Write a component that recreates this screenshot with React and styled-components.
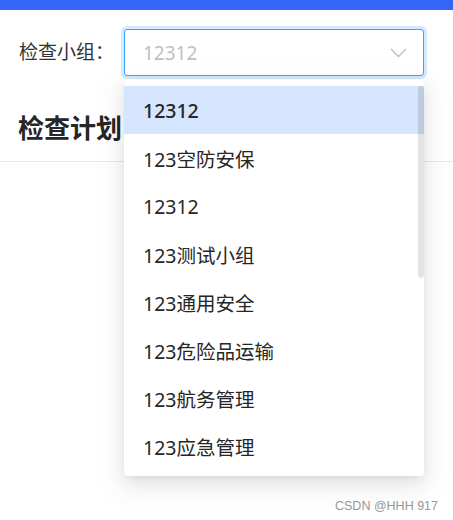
import React from "react";
import styled, { createGlobalStyle } from "styled-components";

const GlobalStyle = createGlobalStyle`
  body {
    margin: 0;
    background: #fff;
    font-family: "Noto Sans", "Noto Sans CJK SC", sans-serif;
    color: #262626;
  }
`;

const Page = styled.div`
  position: relative;
  height: 520px;
  overflow: hidden;
`;

const TopBar = styled.div`
  height: 10px;
  background: #3366f6;
`;

const FormRow = styled.div`
  display: flex;
  align-items: center;
  padding: 19px 0 0 19px;
`;

const Label = styled.label`
  font-size: 19px;
  color: #333;
  width: 105px;
  line-height: 47px;
`;

const SelectWrap = styled.div`
  position: relative;
  width: 300px;
  z-index: 2;
`;

const SelectBox = styled.div`
  box-sizing: border-box;
  height: 47px;
  display: flex;
  align-items: center;
  justify-content: space-between;
  padding: 0 16px 0 18px;
  border: 1px solid #40a0ff;
  border-radius: 3px;
  box-shadow: 0 0 0 3px rgba(64, 160, 255, 0.22);
  background: #fff;
`;

const Placeholder = styled.span`
  font-size: 19px;
  color: #bfbfbf;
`;

const Dropdown = styled.ul`
  position: absolute;
  top: calc(100% + 4px);
  left: 0;
  width: 300px;
  margin: 0;
  padding: 6px 0;
  list-style: none;
  background: #fff;
  border-radius: 4px;
  box-sizing: border-box;
  overflow: hidden;
  box-shadow: 0 6px 16px 0 rgba(0, 0, 0, 0.08),
    0 3px 6px -4px rgba(0, 0, 0, 0.12), 0 9px 28px 8px rgba(0, 0, 0, 0.05);
`;

const Option = styled.li`
  height: 48px;
  display: flex;
  align-items: center;
  padding-left: 19px;
  font-size: 19.5px;
  color: #262626;
  font-weight: ${({ active }) => (active ? 500 : 400)};
  background: ${({ active }) => (active ? "#d5e5fd" : "transparent")};
`;

const ScrollThumb = styled.div`
  position: absolute;
  top: 6px;
  right: 0;
  width: 6px;
  height: 192px;
  border-radius: 3px;
  background: rgba(0, 0, 0, 0.11);
`;

const Heading = styled.h2`
  margin: 35px 0 0;
  padding: 0 18px 16px;
  font-size: 26px;
  line-height: 34px;
  font-weight: 700;
  color: #262626;
  border-bottom: 1px solid #e8e8e8;
`;

const Watermark = styled.div`
  position: absolute;
  right: 15px;
  bottom: 7px;
  font-family: "Liberation Sans", Arial, sans-serif;
  font-size: 12.5px;
  color: #9a9a9a;
`;

const options = [
  "12312",
  "123空防安保",
  "12312",
  "123测试小组",
  "123通用安全",
  "123危险品运输",
  "123航务管理",
  "123应急管理",
];

function Chevron() {
  return (
    <svg width="17" height="10" viewBox="0 0 17 10">
      <polyline
        points="1,1 8.5,8.5 16,1"
        fill="none"
        stroke="#bdbdbd"
        strokeWidth="1.4"
      />
    </svg>
  );
}

export default function App() {
  return (
    <Page>
      <GlobalStyle />
      <TopBar />
      <FormRow>
        <Label>检查小组：</Label>
        <SelectWrap>
          <SelectBox>
            <Placeholder>12312</Placeholder>
            <Chevron />
          </SelectBox>
          <Dropdown>
            {options.map((o, i) => (
              <Option key={i} active={i === 0}>
                {o}
              </Option>
            ))}
            <ScrollThumb />
          </Dropdown>
        </SelectWrap>
      </FormRow>
      <Heading>检查计划</Heading>
      <Watermark>CSDN @HHH 917</Watermark>
    </Page>
  );
}
